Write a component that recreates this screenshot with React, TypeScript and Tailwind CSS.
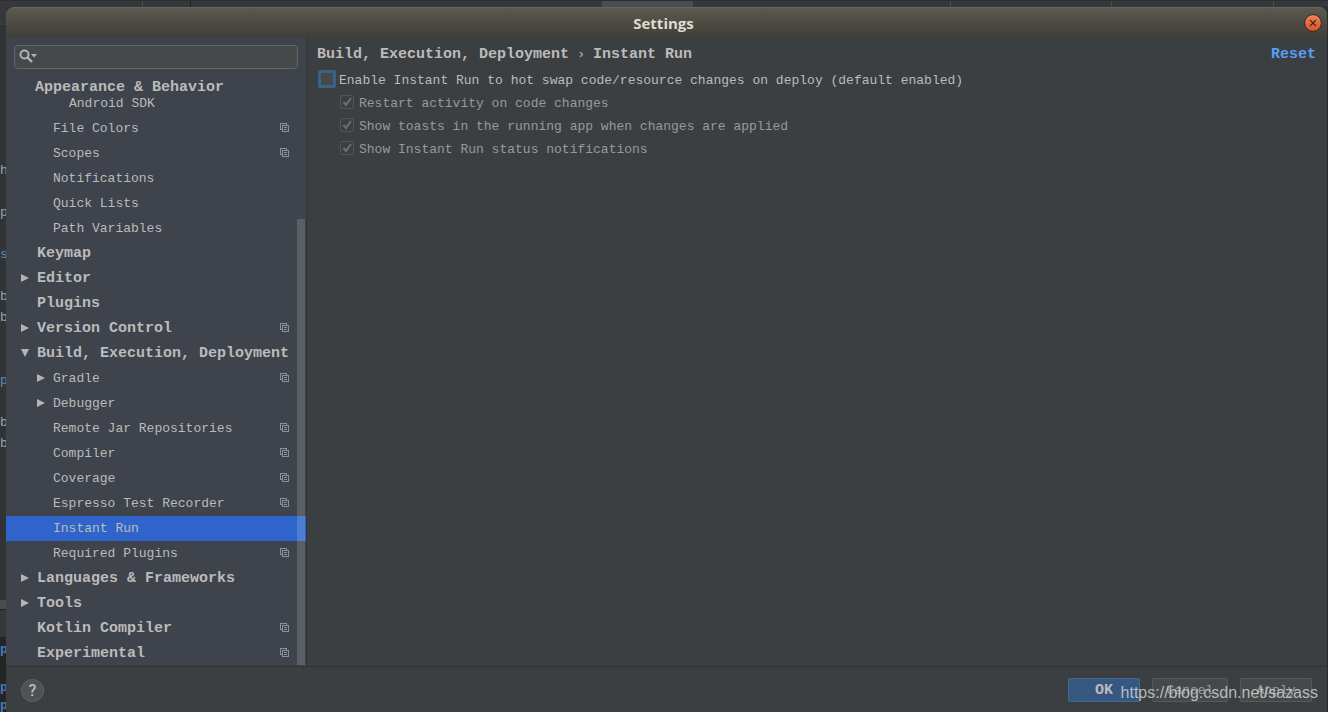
import React from "react";

type TreeItem = {
  label: string;
  level: number;
  arrow?: "right" | "down";
  project?: boolean;
  selected?: boolean;
};

const treeItems: TreeItem[] = [
  { label: "File Colors", level: 2, project: true },
  { label: "Scopes", level: 2, project: true },
  { label: "Notifications", level: 2 },
  { label: "Quick Lists", level: 2 },
  { label: "Path Variables", level: 2 },
  { label: "Keymap", level: 1 },
  { label: "Editor", level: 1, arrow: "right" },
  { label: "Plugins", level: 1 },
  { label: "Version Control", level: 1, arrow: "right", project: true },
  { label: "Build, Execution, Deployment", level: 1, arrow: "down" },
  { label: "Gradle", level: 2, arrow: "right", project: true },
  { label: "Debugger", level: 2, arrow: "right" },
  { label: "Remote Jar Repositories", level: 2, project: true },
  { label: "Compiler", level: 2, project: true },
  { label: "Coverage", level: 2, project: true },
  { label: "Espresso Test Recorder", level: 2, project: true },
  { label: "Instant Run", level: 2, selected: true },
  { label: "Required Plugins", level: 2, project: true },
  { label: "Languages & Frameworks", level: 1, arrow: "right" },
  { label: "Tools", level: 1, arrow: "right" },
  { label: "Kotlin Compiler", level: 1, project: true },
  { label: "Experimental", level: 1, project: true },
];

const subOptions = [
  "Restart activity on code changes",
  "Show toasts in the running app when changes are applied",
  "Show Instant Run status notifications",
];

// one entry for each visible line of the editor behind the dialog
const editorLines = ["h", "", "p", "", "s", "", "b", "b", "", "", "p", "", "b", "b"];

const Arrow = ({ direction }: { direction?: "right" | "down" }) => (
  <svg viewBox="0 0 8 8" className="w-2 h-2 mb-0.5 shrink-0 fill-[#b4b4b4]">
    {direction === "right" && <path d="M0 0L8 4L0 8Z" />}
    {direction === "down" && <path d="M0 0H8L4 8Z" />}
  </svg>
);

const ProjectIcon = () => (
  <svg
    viewBox="0 0 9 9"
    shapeRendering="crispEdges"
    className="w-[9px] h-[9px] mb-0.5 shrink-0 fill-none stroke-[#87939a]"
  >
    <path d="M2.5 6.5H0.5V0.5H6.5V2" />
    <path d="M2.5 2.5H8.5V8.5H2.5ZM4 4.5H7M4 6.5H7" />
  </svg>
);

const TreeRow = ({ item }: { item: TreeItem }) => (
  <li>
    <button
      type="button"
      className={`flex items-center gap-2 w-full h-[25px] pr-[17px] text-left whitespace-nowrap ${
        item.level === 1 ? "pl-[15px] text-[15px] font-bold" : "pl-[31px] text-[13px]"
      } ${item.selected ? "bg-[#2f65ca]" : ""}`}
    >
      <Arrow direction={item.arrow} />
      <span className={item.level === 1 ? "grow pt-0.5" : "grow"}>{item.label}</span>
      {item.project && <ProjectIcon />}
    </button>
  </li>
);

const EditorEdge = () => (
  <div className="w-[6px] shrink-0 overflow-hidden bg-[#313335] text-[13px] leading-[21px] text-[#9da3a8]">
    <div className="h-5 border-b border-[#252627] bg-[#36393b]"></div>
    <div className="h-[133px]"></div>
    {editorLines.map((line, i) => (
      <p key={i} className={`h-[21px] ${line === "s" || i === 10 ? "text-[#5a8fb8]" : ""}`}>
        {line}
      </p>
    ))}
    <div className="h-[146px]"></div>
    <div className="h-[10px] border-b border-[#252627] bg-[#4a4c4e]"></div>
    <div className="h-[27px] bg-[#36393b]"></div>
    <div className="h-full pt-1 bg-[#232526] font-bold text-[#4a78b8] leading-[18px]">
      <p className="h-[38px]">p</p>
      <p className="h-[18px]">p</p>
      <p className="h-[18px]">p</p>
    </div>
  </div>
);

const App = () => {
  return (
    <div className="flex flex-col h-screen min-h-[712px] overflow-hidden bg-[#313335] text-[#bbbbbb] font-['Liberation_Mono',monospace]">
      <div className="flex h-[7px] shrink-0 border-t border-[#2b2d2e] bg-[#36393b]">
        <div className="w-[143px] border-r border-[#4a4c4e]"></div>
        <div className="w-12 border-r border-[#252627]"></div>
        <div className="w-[411px]"></div>
        <div className="w-[91px] bg-[#4a4e51]"></div>
        <div className="w-[258px] border-r border-[#4a4c4e]"></div>
        <div className="w-[161px] border-r border-[#4a4c4e]"></div>
        <div className="w-[162px] border-r border-[#4a4c4e]"></div>
      </div>
      <div className="flex grow min-h-0">
        <EditorEdge />
        <div className="flex flex-col grow min-w-0 rounded-t-lg overflow-hidden bg-[#3c3f41]">
          <header className="grid grid-cols-[1fr_auto_1fr] items-center h-[30px] shrink-0 pr-[6px] bg-linear-to-b from-[#5c594f] to-[#403f39] border-t border-[#6a675d]">
            <h1 className="col-start-2 text-[15px] leading-5 font-bold text-[#dfdbd2] font-['Open_Sans',sans-serif]">
              Settings
            </h1>
            <button
              type="button"
              aria-label="Close"
              className="justify-self-end flex items-center justify-center w-4 h-4 rounded-full bg-linear-to-b from-[#f5805c] to-[#e2501f] outline outline-[#35332d]"
            >
              <svg viewBox="0 0 8 8" className="w-2 h-2 fill-none stroke-[#3b2a20]">
                <path d="M1 1L7 7M7 1L1 7" strokeWidth="1.2" />
              </svg>
            </button>
          </header>

          <div className="flex grow min-h-0">
            <nav className="relative w-[301px] shrink-0 border-r border-[#323437] bg-[#3f434c]">
              <label className="flex items-center h-6 ml-2 mr-2 mt-2 mb-[6px] pl-1 rounded-sm border border-[#646769] bg-[#45494a]">
                <svg viewBox="0 0 20 14" className="w-5 h-[14px] mb-0.5 shrink-0">
                  <circle cx="5.5" cy="5.5" r="4" fill="none" stroke="#b0b2b3" strokeWidth="2" />
                  <path d="M8.5 8.5L13 13" stroke="#b0b2b3" strokeWidth="2.4" />
                  <path d="M12 5H18L15 8.5Z" fill="#b0b2b3" />
                </svg>
                <input
                  type="text"
                  aria-label="Search settings"
                  className="grow min-w-0 bg-transparent text-[13px] outline-none"
                />
              </label>
              <h2 className="h-[22px] pl-[29px] text-[15px] leading-[26px] font-bold">
                Appearance &amp; Behavior
              </h2>
              <p className="h-[19px] pl-[63px] text-[13px] leading-[13px]">Android SDK</p>
              <ul>
                {treeItems.map((item) => (
                  <TreeRow key={item.label} item={item} />
                ))}
              </ul>
              <div className="absolute right-px top-[182px] bottom-px w-2 bg-white/15"></div>
            </nav>

            <main className="grow min-w-0 pl-[10px]">
              <div className="flex justify-between items-center h-8 pt-1 pr-[11px] text-[15px] font-bold">
                <h2 className="flex items-center">
                  <span>Build, Execution, Deployment</span>
                  <span className="w-6 text-center text-[13px] font-normal">›</span>
                  <span>Instant Run</span>
                </h2>
                <a href="#" className="text-[#589df6]">
                  Reset
                </a>
              </div>
              <label className="flex items-center gap-[3px] h-[23px] pl-px text-[13px]">
                <input
                  type="checkbox"
                  className="appearance-none w-[18px] h-[18px] mb-[3px] rounded-xs border-3 border-[#3d6185] bg-[#45494a]"
                />
                Enable Instant Run to hot swap code/resource changes on deploy (default enabled)
              </label>
              {subOptions.map((option) => (
                <label
                  key={option}
                  className="flex items-center gap-[5px] h-[23px] pl-[23px] text-[13px] text-[#999999]"
                >
                  <span className="grid w-[14px] h-[14px] mb-[3px]">
                    <input
                      type="checkbox"
                      defaultChecked
                      disabled
                      className="appearance-none col-start-1 row-start-1 w-[14px] h-[14px] rounded-xs border border-[#545556]"
                    />
                    <svg
                      viewBox="0 0 14 14"
                      className="col-start-1 row-start-1 w-[14px] h-[14px] fill-none stroke-[#6b6d6e]"
                    >
                      <path d="M3.5 7L6 10L11 3" strokeWidth="2" />
                    </svg>
                  </span>
                  {option}
                </label>
              ))}
            </main>
          </div>

          <footer className="relative flex items-center gap-3 h-[46px] shrink-0 pl-[15px] pr-[15px] border-t border-[#2f3133] text-[15px]">
            <button
              type="button"
              aria-label="Help"
              className="w-[23px] h-[23px] mt-0.5 mr-auto rounded-full border border-[#626567] bg-[#4e5254] text-base leading-5 font-medium font-['Roboto',sans-serif]"
            >
              ?
            </button>
            <button
              type="button"
              className="w-[72px] h-6 pt-0.5 rounded-xs border border-[#43698f] bg-[#365880] leading-5 font-bold"
            >
              OK
            </button>
            <button
              type="button"
              className="w-[76px] h-6 pt-0.5 rounded-xs border border-[#55595b] bg-[#45494b] text-[13px] leading-5 text-[#999999]"
            >
              Cancel
            </button>
            <button
              type="button"
              className="w-[72px] h-6 pt-0.5 rounded-xs border border-[#55595b] bg-[#45494b] text-[13px] leading-5 text-[#999999]"
            >
              Apply
            </button>
            <span className="absolute right-[9px] top-[14px] text-base text-[#d0d0d0]/85 font-['Liberation_Sans',sans-serif] pointer-events-none">
              https://blog.csdn.net/sazass
            </span>
          </footer>
        </div>
        <div className="w-px shrink-0 bg-[#2b2b2b]"></div>
      </div>
    </div>
  );
};
export default App;
